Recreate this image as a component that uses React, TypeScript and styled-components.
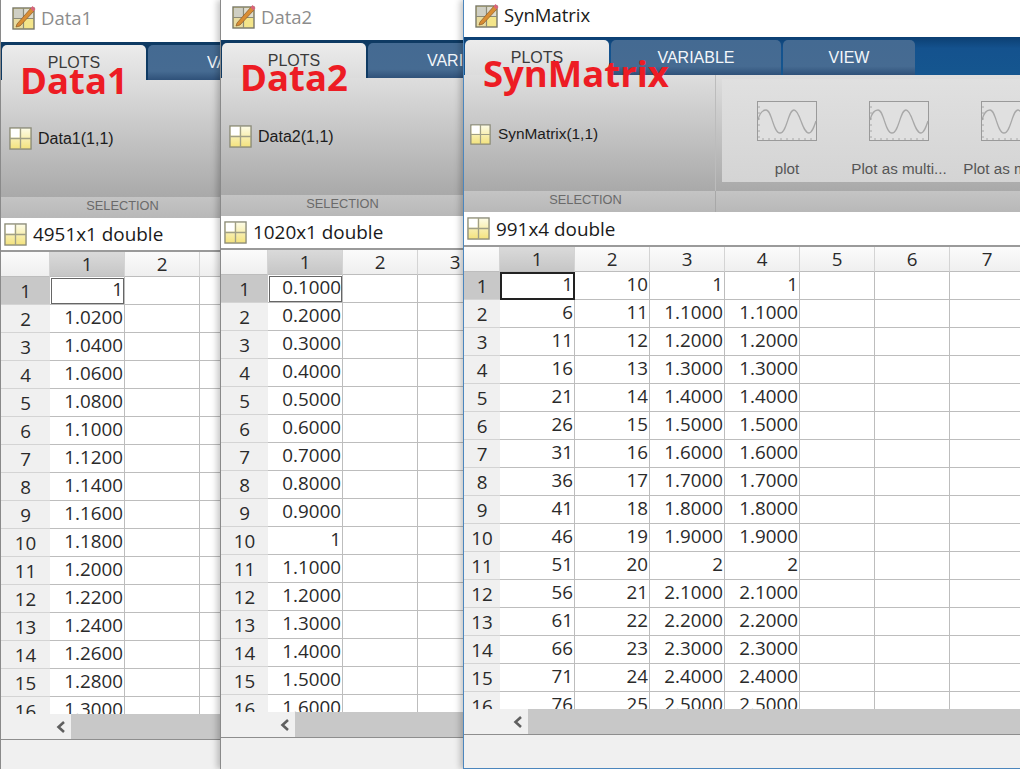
import React from "react";
import styled, { createGlobalStyle } from "styled-components";

const GlobalStyle = createGlobalStyle`
  html, body {
    margin: 0;
    padding: 0;
    background: #fff;
  }
`;

const Desktop = styled.div`
  display: flex;
  width: 1020px;
  height: 769px;
  overflow: hidden;
`;

const Window = styled.section<{ $width: number; $focused?: boolean }>`
  position: relative;
  display: flex;
  flex: 0 0 ${(p) => p.$width}px;
  flex-direction: column;
  height: 769px;
  overflow: hidden;
  box-sizing: border-box;
  border-left: 1px solid ${(p) => (p.$focused ? "#4c86bd" : "#8a8a8a")};
  border-bottom: ${(p) => (p.$focused ? "1px solid #4c86bd" : "none")};
  background: #f0f0f0;
  box-shadow: -3px 0 6px rgba(0, 0, 0, 0.22);
`;

const TitleBar = styled.div<{ $height: number; $focused?: boolean }>`
  display: flex;
  flex: 0 0 ${(p) => p.$height}px;
  align-items: center;
  gap: 5px;
  padding: 0 0 8px 11px;
  box-sizing: border-box;
  background: #fff;
  color: ${(p) => (p.$focused ? "#1a1a1a" : "#8c8c8c")};
  font-family: "Open Sans", sans-serif;
  font-size: 18.5px;
`;

const TabBand = styled.div<{ $focused?: boolean }>`
  display: flex;
  flex: 0 0 38px;
  align-items: flex-end;
  gap: 2px;
  padding-left: 1px;
  background: ${(p) => (p.$focused ? "linear-gradient(#0c3f72, #14528e 30%, #15568f)" : "#0e3a63")};
`;

const Tab = styled.div<{ $width: number; $active?: boolean }>`
  flex: 0 0 ${(p) => p.$width}px;
  height: 35px;
  padding-top: 6px;
  box-sizing: border-box;
  border-radius: 5px 5px 0 0;
  background: ${(p) =>
    p.$active ? "linear-gradient(#ececec, #dcdcdc)" : "linear-gradient(#446a92, #466b92 75%, #2f5179)"};
  color: ${(p) => (p.$active ? "#3a3a3a" : "#f2f6fa")};
  font-family: "Liberation Sans", sans-serif;
  font-size: 16px;
  line-height: 24px;
  text-align: center;
  white-space: nowrap;
`;

const Ribbon = styled.div<{ $height: number }>`
  display: flex;
  flex: 0 0 ${(p) => p.$height}px;
  background: linear-gradient(#dedede, #a9a9a9);
`;

const SelectionSection = styled.div<{ $focused?: boolean }>`
  display: flex;
  flex: 0 0 252px;
  align-items: center;
  gap: ${(p) => (p.$focused ? 7 : 6)}px;
  padding: ${(p) => (p.$focused ? "2px 0 0 6px" : "0 0 0 8px")};
  box-sizing: border-box;
  border-right: 1px solid #bcbcbc;
  color: #1c1c1c;
  font-family: "Liberation Sans", sans-serif;
  font-size: ${(p) => (p.$focused ? 15.4 : 16)}px;
`;

const Gallery = styled.div`
  display: flex;
  flex: 1;
  margin: 4px 0 9px 6px;
  padding-left: 9px;
  background: linear-gradient(#e0e0e0, #d4d4d4);
`;

const GalleryItem = styled.div`
  display: flex;
  flex: 0 0 112px;
  flex-direction: column;
  align-items: center;
  padding-top: 22px;
  color: #555;
  font-family: "Liberation Sans", sans-serif;
  font-size: 15.2px;
  white-space: nowrap;
  span {
    margin-top: 19px;
  }
`;

const SectionFooter = styled.div`
  display: flex;
  flex: 0 0 21px;
  background: linear-gradient(#c4c4c4, #b8b8b8);
  color: #6a6a6a;
  font-family: "Liberation Sans", sans-serif;
  font-size: 12.8px;
  line-height: 18px;
`;

const FooterLabel = styled.div`
  flex: 0 0 252px;
  padding-right: 8px;
  box-sizing: border-box;
  border-right: 1px solid #a8a8a8;
  text-align: center;
`;

const SizeRow = styled.div<{ $height: number }>`
  display: flex;
  flex: 0 0 ${(p) => p.$height}px;
  align-items: center;
  gap: 6px;
  padding-left: 3px;
  box-sizing: border-box;
  border-bottom: 2px solid #9a9a9a;
  background: #fff;
  color: #1a1a1a;
  font-family: "Open Sans", sans-serif;
  font-size: 18.9px;
`;

const GridClip = styled.div`
  flex: 1;
  min-height: 0;
  overflow: hidden;
  background: #fff;
`;

const SheetTable = styled.table<{ $width: number }>`
  width: ${(p) => p.$width}px;
  table-layout: fixed;
  border-collapse: separate;
  border-spacing: 0;
  font-family: "Open Sans", sans-serif;
  font-size: 18.8px;
  color: #2a2a2a;
`;

const ColHead = styled.th<{ $width: number; $selected?: boolean }>`
  width: ${(p) => p.$width}px;
  height: 25px;
  padding: 0;
  box-sizing: border-box;
  border-right: 1px solid #d4d4d4;
  border-bottom: 1px solid #bdbdbd;
  background: ${(p) =>
    p.$selected ? "linear-gradient(#dadada, #c6c6c6)" : "linear-gradient(#fbfbfb, #efefef)"};
  font-weight: 400;
  line-height: 24px;
  text-align: center;
`;

const RowHead = styled.th<{ $selected?: boolean }>`
  height: 28px;
  padding: 0;
  box-sizing: border-box;
  border-bottom: 1px solid #d4d4d4;
  background: ${(p) => (p.$selected ? "#c8c8c8" : "#f0f0f0")};
  font-weight: 400;
  text-align: center;
`;

const Cell = styled.td<{ $selected?: boolean; $focused?: boolean }>`
  height: 28px;
  padding: 0 1px 2px 0;
  box-sizing: border-box;
  border-right: 1px solid #bdbdbd;
  border-bottom: 1px solid #bdbdbd;
  text-align: right;
  line-height: 25px;
  outline: ${(p) =>
    p.$selected ? (p.$focused ? "2px solid #222" : "1.5px solid #666") : "none"};
  outline-offset: -2px;
`;

const ScrollRow = styled.div`
  display: flex;
  flex: 0 0 25px;
  background: #f0f0f0;
`;

const ScrollArrow = styled.div<{ $width: number }>`
  display: flex;
  flex: 0 0 ${(p) => p.$width}px;
  align-items: center;
  justify-content: flex-end;
  padding-right: 4px;
  box-sizing: border-box;
`;

const ScrollThumb = styled.div`
  flex: 1;
  background: #c8c8c8;
`;

const StatusBar = styled.div<{ $height: number }>`
  flex: 0 0 ${(p) => p.$height}px;
  box-sizing: border-box;
  border-top: 1px solid #8e8e8e;
  background: #f0f0f0;
`;

const WatermarkLabel = styled.div<{ $left: number; $top: number }>`
  position: absolute;
  left: ${(p) => p.$left}px;
  top: ${(p) => p.$top}px;
  color: #ed1c24;
  font-family: "Open Sans", sans-serif;
  font-size: 36.5px;
  font-weight: 700;
  line-height: 1;
  white-space: nowrap;
`;

const GridIcon = ({ size }: { size: number }) => (
  <svg width={size} height={size} viewBox="0 0 24 24" style={{ flex: "none" }}>
    <defs>
      <linearGradient id="cellFill" x1="0" y1="0" x2="0" y2="1">
        <stop offset="0" stopColor="#fdfce8" />
        <stop offset="1" stopColor="#f3e27c" />
      </linearGradient>
    </defs>
    <rect x="1" y="1" width="22" height="22" fill="url(#cellFill)" stroke="#8a8a78" strokeWidth="1.4" />
    <rect x="2" y="2" width="9" height="9" fill="#ffffff" />
    <path d="M12 1v22M1 12h22" stroke="#a09f86" strokeWidth="1.4" />
  </svg>
);

const EditorIcon = () => (
  <svg width="24" height="26" viewBox="0 0 24 26" style={{ flex: "none" }}>
    <rect x="1" y="4" width="21" height="21" fill="#f4e58a" stroke="#77776a" strokeWidth="1.4" />
    <rect x="2" y="5" width="9" height="9" fill="#cfcfc4" />
    <rect x="12" y="5" width="9" height="9" fill="#dedccf" />
    <rect x="2" y="15" width="9" height="9" fill="#e9dca0" />
    <path d="M11.5 4v21M1 14.500h21" stroke="#8c8b78" strokeWidth="1.2" />
    <path d="M5 20 L19 4 L22 7 L8 22 L4 23 Z" fill="#d98d34" stroke="#8a5a24" strokeWidth="0.7" />
    <path d="M18.500 4.500 L20.500 2 L23.500 5 L21.500 7.500 Z" fill="#d9647a" />
  </svg>
);

const SineIcon = () => (
  <svg width="60" height="40" viewBox="0 0 60 40">
    <rect x="0.5" y="0.5" width="59" height="39" fill="#e0e0e0" stroke="#9a9a9a" />
    <path
      d="M1 19 C3 11 6 9 9 9 C15 9 16 32 23 32 C30 32 31 9 37 9 C43 9 45 32 52 32 C55 32 57 26 59 20"
      fill="none"
      stroke="#a8a8a8"
      strokeWidth="1.3"
    />
    <path
      d="M1 6h2M1 12h2M1 18h2M1 24h2M1 30h2M1 36h2M6 39v-2M12 39v-2M18 39v-2M24 39v-2M30 39v-2M36 39v-2M42 39v-2M48 39v-2M54 39v-2"
      stroke="#9a9a9a"
      strokeWidth="0.8"
    />
  </svg>
);

const LeftChevron = () => (
  <svg width="12" height="14" viewBox="0 0 12 14">
    <path d="M9 2 L3.500 7 L9 12" fill="none" stroke="#5f5f5f" strokeWidth="2.600" />
  </svg>
);

const formatValue = (value: number): string => {
  const rounded = Math.round(value * 10000) / 10000;
  return Number.isInteger(rounded) ? String(rounded) : rounded.toFixed(4);
};

const range = (count: number) => Array.from({ length: count }, (_, i) => i);

type WindowSpec = {
  name: string;
  width: number;
  focused?: boolean;
  titleHeight: number;
  ribbonHeight: number;
  sizeText: string;
  sizeHeight: number;
  statusHeight: number;
  rowHeadWidth: number;
  arrowWidth: number;
  colCount: number;
  variableTabWidth: number;
  label: { left: number; top: number };
  rows: string[][];
};

const windows: WindowSpec[] = [
  {
    name: "Data1",
    width: 220,
    titleHeight: 42,
    ribbonHeight: 117,
    sizeText: "4951x1 double",
    sizeHeight: 34,
    statusHeight: 30,
    rowHeadWidth: 49,
    arrowWidth: 70,
    colCount: 3,
    variableTabWidth: 195,
    label: { left: 19, top: 62 },
    rows: range(16).map((i) => [formatValue(1 + i * 0.02)]),
  },
  {
    name: "Data2",
    width: 243,
    titleHeight: 40,
    ribbonHeight: 117,
    sizeText: "1020x1 double",
    sizeHeight: 34,
    statusHeight: 32,
    rowHeadWidth: 47,
    arrowWidth: 74,
    colCount: 3,
    variableTabWidth: 195,
    label: { left: 19, top: 59 },
    rows: range(16).map((i) => [formatValue(0.1 * (i + 1))]),
  },
  {
    name: "SynMatrix",
    width: 557,
    focused: true,
    titleHeight: 37,
    ribbonHeight: 116,
    sizeText: "991x4 double",
    sizeHeight: 35,
    statusHeight: 34,
    rowHeadWidth: 36,
    arrowWidth: 64,
    colCount: 8,
    variableTabWidth: 170,
    label: { left: 19, top: 55 },
    rows: range(16).map((i) => [
      String(1 + i * 5),
      String(10 + i),
      formatValue(1 + i * 0.1),
      formatValue(1 + i * 0.1),
    ]),
  },
];

const MatlabWindow = ({ spec }: { spec: WindowSpec }) => (
  <Window $width={spec.width} $focused={spec.focused}>
    <TitleBar $height={spec.titleHeight} $focused={spec.focused}>
      <EditorIcon />
      {spec.name}
    </TitleBar>
    <TabBand $focused={spec.focused}>
      <Tab $width={144} $active>PLOTS</Tab>
      <Tab $width={spec.variableTabWidth}>VARIABLE</Tab>
      <Tab $width={132}>VIEW</Tab>
    </TabBand>
    <Ribbon $height={spec.ribbonHeight}>
      <SelectionSection $focused={spec.focused}>
        <GridIcon size={spec.focused ? 21 : 23} />
        {spec.name}(1,1)
      </SelectionSection>
      {spec.focused && (
        <Gallery>
          <GalleryItem><SineIcon /><span>plot</span></GalleryItem>
          <GalleryItem><SineIcon /><span>Plot as multi...</span></GalleryItem>
          <GalleryItem><SineIcon /><span>Plot as multi...</span></GalleryItem>
        </Gallery>
      )}
    </Ribbon>
    <SectionFooter>
      <FooterLabel>SELECTION</FooterLabel>
    </SectionFooter>
    <SizeRow $height={spec.sizeHeight}>
      <GridIcon size={23} />
      {spec.sizeText}
    </SizeRow>
    <GridClip>
      <SheetTable $width={spec.rowHeadWidth + spec.colCount * 75}>
        <thead>
          <tr>
            <ColHead $width={spec.rowHeadWidth} />
            {range(spec.colCount).map((c) => (
              <ColHead key={c} $width={75} $selected={c === 0}>{c + 1}</ColHead>
            ))}
          </tr>
        </thead>
        <tbody>
          {spec.rows.map((row, r) => (
            <tr key={r}>
              <RowHead $selected={r === 0}>{r + 1}</RowHead>
              {range(spec.colCount).map((c) => (
                <Cell key={c} $focused={spec.focused} $selected={r === 0 && c === 0}>{row[c] ?? ""}</Cell>
              ))}
            </tr>
          ))}
        </tbody>
      </SheetTable>
    </GridClip>
    <ScrollRow>
      <ScrollArrow $width={spec.arrowWidth}><LeftChevron /></ScrollArrow>
      <ScrollThumb />
    </ScrollRow>
    <StatusBar $height={spec.statusHeight} />
    <WatermarkLabel $left={spec.label.left} $top={spec.label.top}>
      {spec.name}
    </WatermarkLabel>
  </Window>
);

export default function App() {
  return (
    <>
      <GlobalStyle />
      <Desktop>
        {windows.map((w) => (
          <MatlabWindow key={w.name} spec={w} />
        ))}
      </Desktop>
    </>
  );
}
